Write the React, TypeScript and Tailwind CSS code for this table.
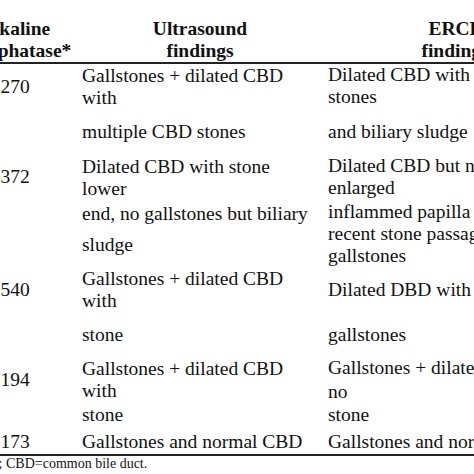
const Line = ({ children, className = "" }: { children: React.ReactNode; className?: string }) => (
  <div className={`h-[22px] leading-[22px] whitespace-nowrap ${className}`}>{children}</div>
);

export default function App() {
  return (
    <div className="w-[474px] h-[474px] overflow-hidden bg-white text-[#111] font-['Liberation_Serif',serif] text-[19.5px]">
      <div className="ml-[-50px] w-[700px]">
        {/* header */}
        <div className="grid grid-cols-[130px_246px_256px] h-[62px] pt-[18.3px] font-bold leading-[21.6px] whitespace-nowrap">
          <div className="text-center">
            <div>Alkaline</div>
            <div>phosphatase*</div>
          </div>
          <div className="pl-[2px] pr-[8px] text-center">
            <div>Ultrasound</div>
            <div>findings</div>
          </div>
          <div className="pl-[2px] text-center">
            <div>ERCP</div>
            <div>findings</div>
          </div>
        </div>
        <div className="h-[1.5px] bg-[#222]" />

        {/* row 1 */}
        <div className="grid grid-cols-[130px_246px_256px] h-[86.5px]">
          <div className="text-center pt-[12.2px]">
            <Line>270</Line>
          </div>
          <div className="pl-[2px] pt-[1.2px]">
            <Line>Gallstones + dilated CBD</Line>
            <Line className="mt-[0.4px]">with</Line>
            <Line className="mt-[11.6px]">multiple CBD stones</Line>
          </div>
          <div className="pl-[2px] pt-[0.6px]">
            <Line>Dilated CBD with</Line>
            <Line className="mt-[0.3px]">stones</Line>
            <Line className="mt-[12.3px]">and biliary sludge</Line>
          </div>
        </div>

        {/* row 2 */}
        <div className="grid grid-cols-[130px_246px_256px] h-[118px]">
          <div className="text-center pt-[16.4px]">
            <Line>372</Line>
          </div>
          <div className="pl-[2px] pt-[5.7px]">
            <Line>Dilated CBD with stone</Line>
            <Line className="mt-[0.7px]">lower</Line>
            <Line className="mt-[3px]">end, no gallstones but biliary</Line>
            <Line className="mt-[8.7px]">sludge</Line>
          </div>
          <div className="pl-[2px] pt-[5.4px]">
            <Line>Dilated CBD but no stone,</Line>
            <Line>enlarged</Line>
            <Line className="mt-[1.3px]">inflammed papilla</Line>
            <Line>recent stone passage,</Line>
            <Line>gallstones</Line>
          </div>
        </div>

        {/* row 3 */}
        <div className="grid grid-cols-[130px_246px_256px] h-[82px]">
          <div className="text-center pt-[11.1px]">
            <Line>540</Line>
          </div>
          <div className="pl-[2px] pt-[0.4px]">
            <Line>Gallstones + dilated CBD</Line>
            <Line>with</Line>
            <Line className="mt-[12px]">stone</Line>
          </div>
          <div className="pl-[2px] pt-[11.1px]">
            <Line>Dilated DBD with</Line>
            <Line className="mt-[23px]">gallstones</Line>
          </div>
        </div>

        {/* row 4 */}
        <div className="grid grid-cols-[130px_246px_256px] h-[78px]">
          <div className="text-center pt-[19.1px]">
            <Line>194</Line>
          </div>
          <div className="pl-[2px] pt-[8.4px]">
            <Line>Gallstones + dilated CBD</Line>
            <Line>with</Line>
            <Line className="mt-[1.4px]">stone</Line>
          </div>
          <div className="pl-[2px] pt-[7.4px]">
            <Line>Gallstones + dilated CBD,</Line>
            <Line className="mt-[1.3px]">no</Line>
            <Line className="mt-[1.4px]">stone</Line>
          </div>
        </div>

        {/* row 5 */}
        <div className="grid grid-cols-[130px_246px_256px] h-[26.3px] pt-[2.7px]">
          <div className="text-center">
            <Line>173</Line>
          </div>
          <div className="pl-[2px]">
            <Line>Gallstones and normal CBD</Line>
          </div>
          <div className="pl-[2px]">
            <Line>Gallstones and normal CBD</Line>
          </div>
        </div>
        <div className="h-[1.7px] bg-[#222]" />

        <div className="ml-[48.6px] text-[14px] leading-[16px] whitespace-nowrap">; CBD=common bile duct.</div>
      </div>
    </div>
  );
}
